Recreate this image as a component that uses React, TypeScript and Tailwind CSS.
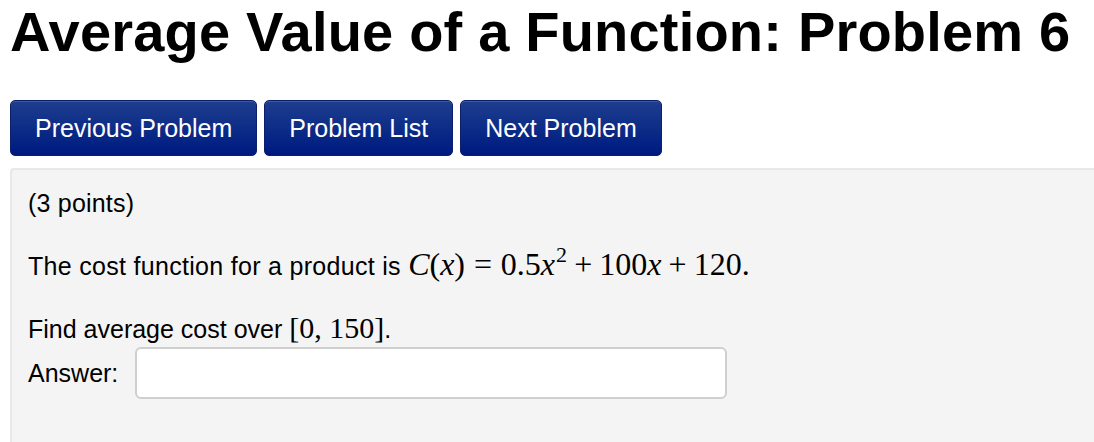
export default function App() {
  const btn =
    'h-[56px] px-[24px] rounded-[5px] border border-[#0b1f6b] bg-gradient-to-b from-[#1e3d8e] to-[#001880] text-white text-[25px] leading-none shadow-[inset_0_1px_0_rgba(255,255,255,0.15)]'

  const serif = "font-['Liberation_Serif','Times_New_Roman',serif]"

  return (
    <div className="w-[1094px] h-[442px] overflow-hidden bg-white font-['Liberation_Sans',Arial,sans-serif] text-black">
      <h1 className="pl-[10px] text-[56px] font-bold leading-[64px] tracking-[0.2px] whitespace-nowrap">
        Average Value of a Function: Problem 6
      </h1>

      {/* Nav buttons */}
      <div className="flex gap-[7px] pl-[10px] mt-[36px]">
        <button className={btn}>Previous Problem</button>
        <button className={btn}>Problem List</button>
        <button className={btn}>Next Problem</button>
      </div>

      {/* Problem body */}
      <div className="ml-[10px] mt-[12px] w-[1120px] h-[300px] bg-[#f4f4f4] border-2 border-[#e8e8e8] rounded-tl-[4px] pl-[16px] pt-[18px] text-[25px] leading-[30px]">
        <p className="tracking-[0.2px]">(3 points)</p>

        <p className="mt-[31px] tracking-[0.3px]">
          The cost function for a product is{' '}
          <span className={`${serif} text-[32px] leading-[30px] tracking-normal`}>
            <i>C</i>(<i>x</i>)<span className="mx-[0.278em]">=</span>0.5<i>x</i>
            <sup className="text-[22px] leading-none relative -top-[13px] ml-[1px]">2</sup>
            <span className="mx-[0.222em]">+</span>100<i>x</i>
            <span className="mx-[0.222em]">+</span>120.
          </span>
        </p>

        <p className="mt-[32px]">
          Find average cost over{' '}
          <span className={`${serif} text-[30px] leading-[30px]`}>[0, 150]</span>.
        </p>

        <div className="flex items-center mt-[3px]">
          <span>Answer:</span>
          <input
            type="text"
            className="ml-[17px] w-[592px] h-[52px] bg-white border-2 border-[#cfcfcf] rounded-[6px] outline-none"
          />
        </div>
      </div>
    </div>
  )
}
